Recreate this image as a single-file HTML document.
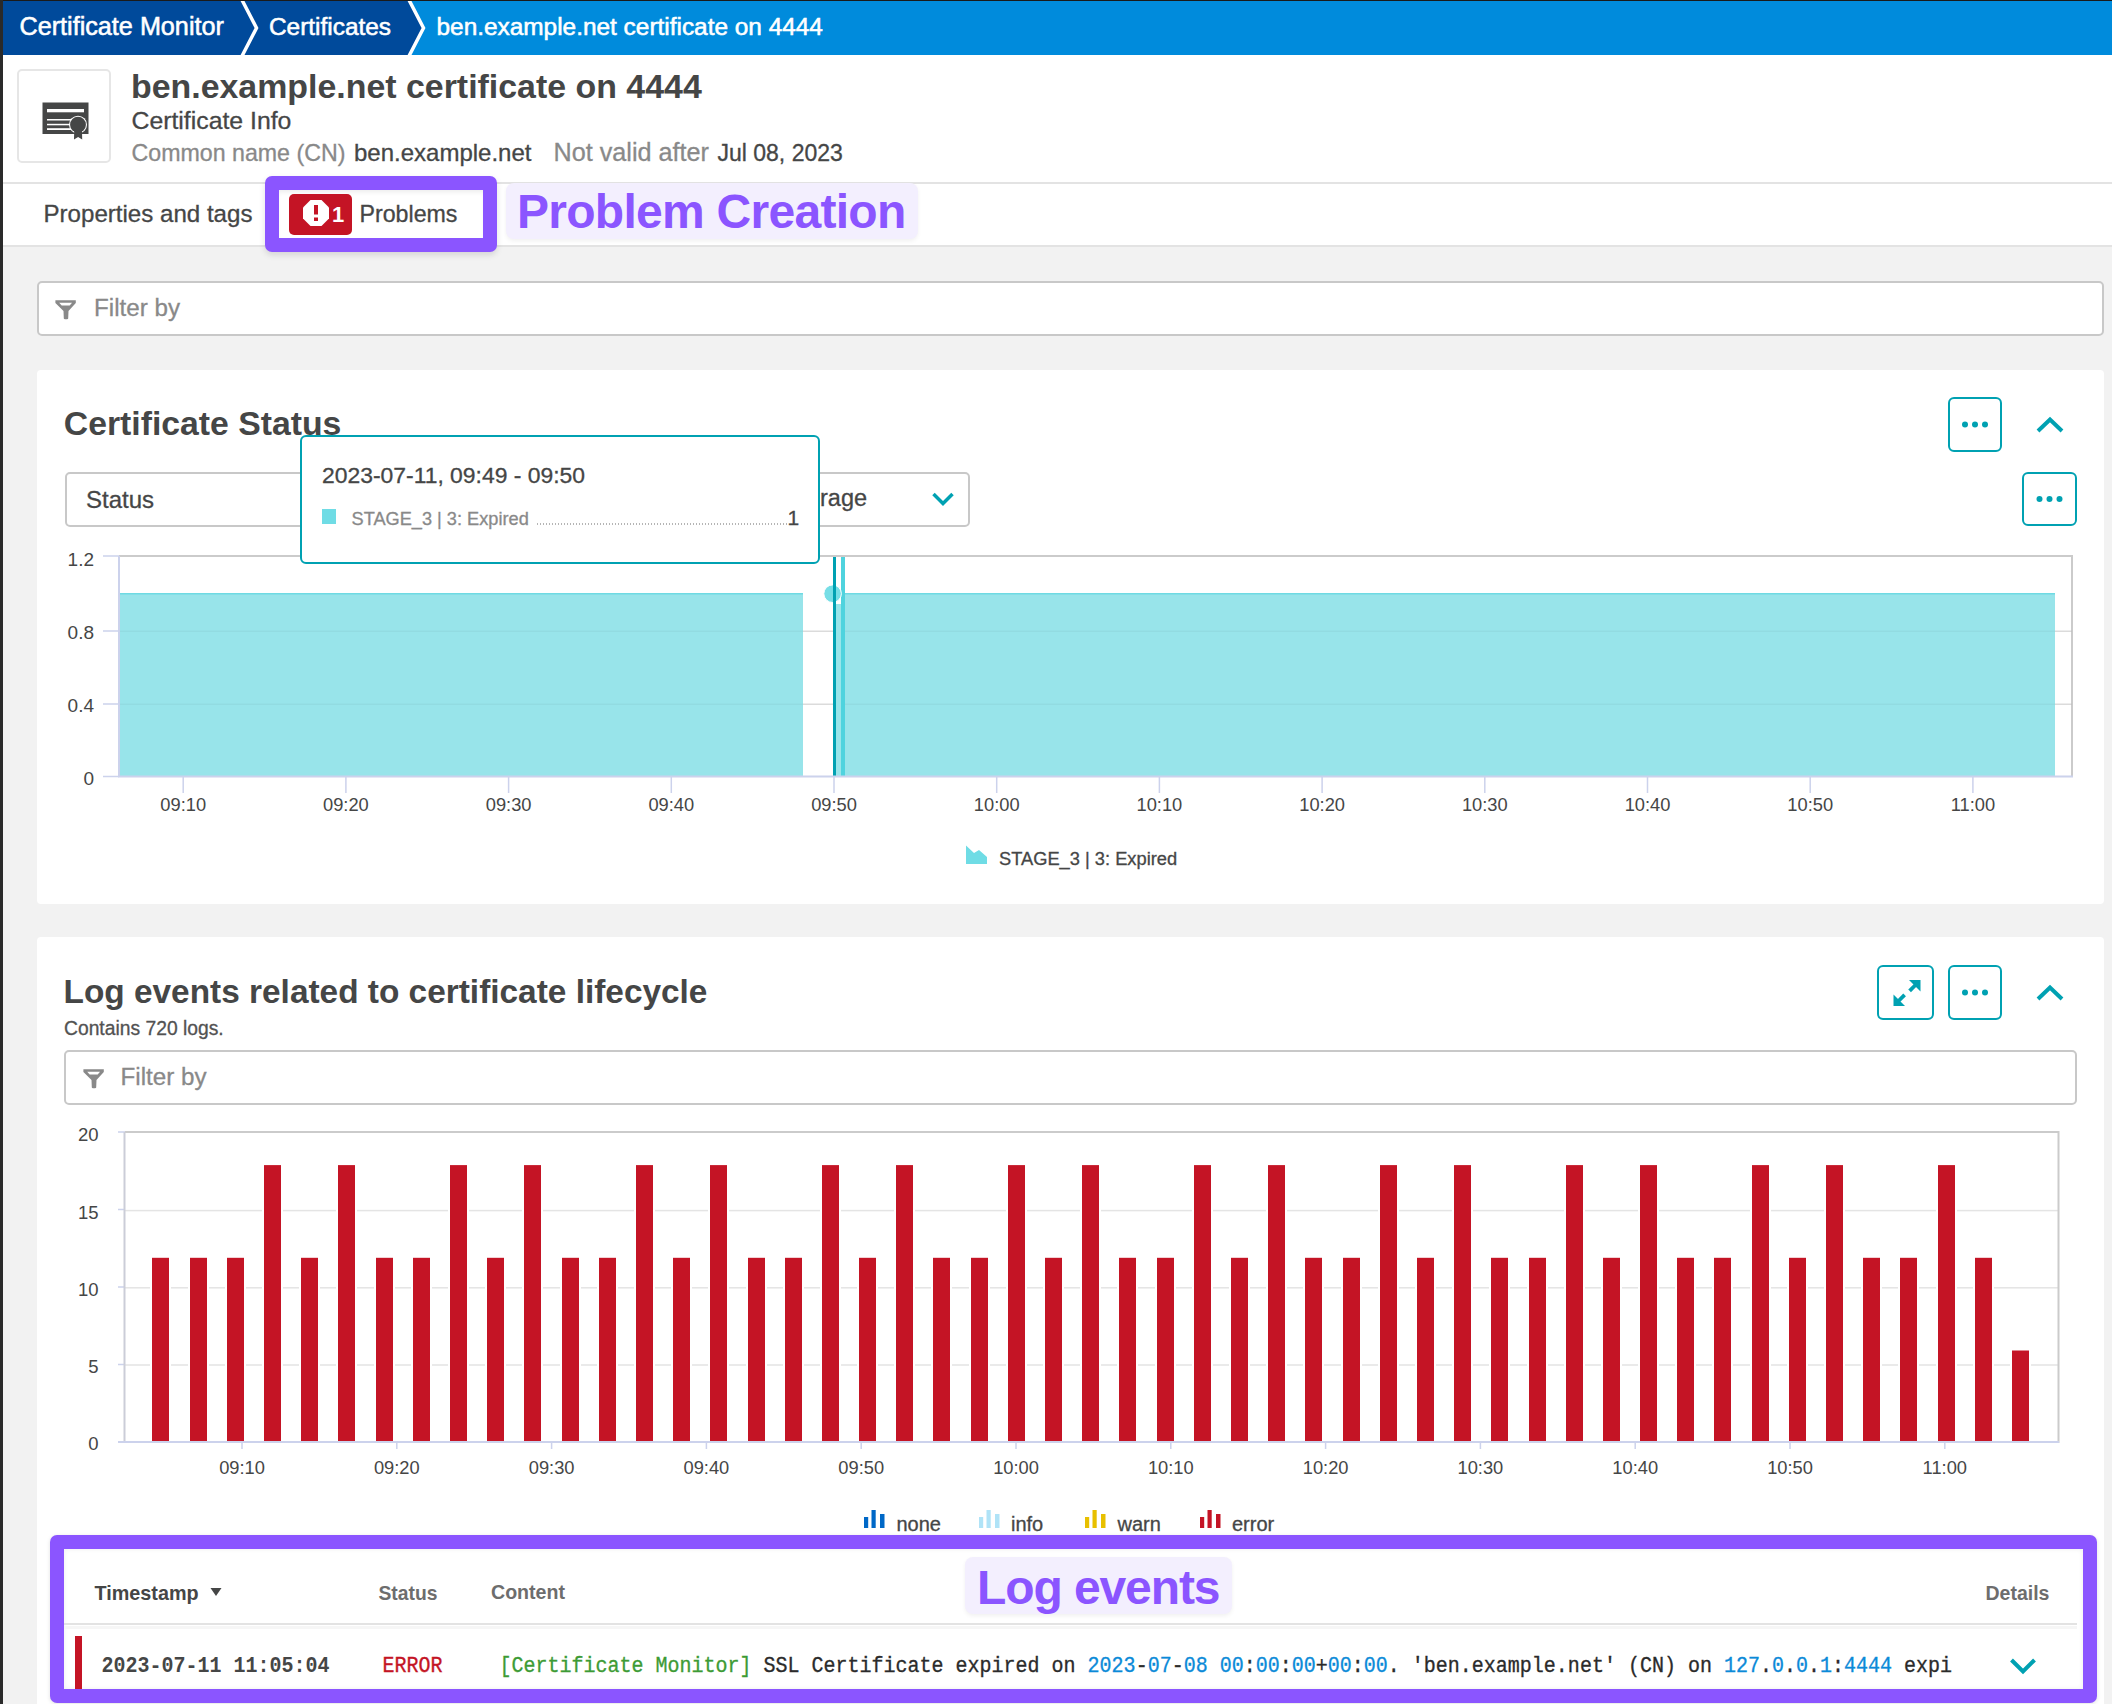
<!DOCTYPE html>
<html><head><meta charset="utf-8"><title>Certificate</title>
<style>
html,body{margin:0;padding:0;}
body{width:2112px;height:1704px;position:relative;overflow:hidden;background:#f2f2f2;font-family:'Liberation Sans', sans-serif;}
.r{position:absolute;}
.t{position:absolute;line-height:1;white-space:nowrap;}
</style></head><body>
<div class="r" style="left:0px;top:0px;width:2112px;height:1704px;background:#f2f2f2"></div>
<div class="r" style="left:3px;top:55px;width:2109px;height:191px;background:#fff"></div>
<div class="r" style="left:3px;top:182px;width:2109px;height:2px;background:#e3e3e3"></div>
<div class="r" style="left:3px;top:245px;width:2109px;height:2px;background:#e3e3e3"></div>
<svg class="r" style="left:0;top:0" width="2112" height="56" viewBox="0 0 2112 56">
<rect x="0" y="0" width="2112" height="55" fill="#008bdc"/>
<polygon points="0,0 410,0 424.5,28 410,55 0,55" fill="#004a9b"/>
<polyline points="242,0 256.5,28 242,56" fill="none" stroke="#fff" stroke-width="3.5"/>
<polyline points="409,0 423.5,28 409,56" fill="none" stroke="#fff" stroke-width="3.5"/>
<rect x="0" y="0" width="2112" height="1" fill="#1a1a1a"/>
</svg>
<div class="r" style="left:0px;top:0px;width:3px;height:1704px;background:#2a2a2a"></div>
<div class="t" style="left:19.5px;top:14.3px;font-size:25.2px;color:#fff;font-weight:normal;font-family:'Liberation Sans', sans-serif;-webkit-text-stroke:0.3px currentColor;-webkit-text-stroke:0.55px #fff;">Certificate Monitor</div>
<div class="t" style="left:269.0px;top:14.9px;font-size:24.4px;color:#fff;font-weight:normal;font-family:'Liberation Sans', sans-serif;-webkit-text-stroke:0.3px currentColor;-webkit-text-stroke:0.55px #fff;">Certificates</div>
<div class="t" style="left:436.5px;top:14.9px;font-size:24.4px;color:#fff;font-weight:normal;font-family:'Liberation Sans', sans-serif;-webkit-text-stroke:0.3px currentColor;-webkit-text-stroke:0.55px #fff;">ben.example.net certificate on 4444</div>
<div class="r" style="left:17px;top:69px;width:94px;height:94px;border:2px solid #e6e6e6;border-radius:5px;box-sizing:border-box;background:#fff"></div>
<svg class="r" style="left:40px;top:100px" width="50" height="42" viewBox="0 0 50 42">
<rect x="2.5" y="2.5" width="46" height="31.5" fill="#454646"/>
<rect x="7" y="9" width="37" height="3.3" fill="#fff"/>
<rect x="7" y="19" width="25" height="1.5" fill="#fff"/>
<rect x="7" y="23.8" width="25" height="1.5" fill="#fff"/>
<rect x="7" y="28.2" width="25" height="1.8" fill="#fff"/>
<circle cx="38" cy="24.7" r="9" fill="#fff"/>
<circle cx="38" cy="24.7" r="7.9" fill="#454646"/>
<polygon points="34.2,31 42,31 42.2,39.6 38.1,37 34,39.6" fill="#454646"/>
</svg>
<div class="t" style="left:131.0px;top:69.8px;font-size:33.9px;color:#454646;font-weight:bold;font-family:'Liberation Sans', sans-serif;">ben.example.net certificate on 4444</div>
<div class="t" style="left:131.5px;top:109.2px;font-size:24.8px;color:#454646;font-weight:normal;font-family:'Liberation Sans', sans-serif;-webkit-text-stroke:0.3px currentColor;">Certificate Info</div>
<div class="t" style="left:131.5px;top:142.1px;font-size:23.2px;color:#898989;font-weight:normal;font-family:'Liberation Sans', sans-serif;-webkit-text-stroke:0.3px currentColor;">Common name (CN)</div>
<div class="t" style="left:354.0px;top:141.4px;font-size:24.0px;color:#454646;font-weight:normal;font-family:'Liberation Sans', sans-serif;-webkit-text-stroke:0.3px currentColor;">ben.example.net</div>
<div class="t" style="left:553.5px;top:140.4px;font-size:25.2px;color:#898989;font-weight:normal;font-family:'Liberation Sans', sans-serif;-webkit-text-stroke:0.3px currentColor;">Not valid after</div>
<div class="t" style="left:717.5px;top:142.2px;font-size:23.0px;color:#454646;font-weight:normal;font-family:'Liberation Sans', sans-serif;-webkit-text-stroke:0.3px currentColor;">Jul 08, 2023</div>
<div class="t" style="left:43.5px;top:201.6px;font-size:24.1px;color:#454646;font-weight:normal;font-family:'Liberation Sans', sans-serif;-webkit-text-stroke:0.3px currentColor;">Properties and tags</div>
<div class="r" style="left:265px;top:176px;width:232px;height:76px;background:#8b55ff;border-radius:7px;box-shadow:0 3px 6px rgba(0,0,0,0.12)"></div>
<div class="r" style="left:279px;top:190px;width:204px;height:48px;background:#fff;box-shadow:inset 0 4px 5px -2px rgba(0,0,0,0.08)"></div>
<div class="r" style="left:289px;top:194px;width:63px;height:41px;background:#c41425;border-radius:5px"></div>
<svg class="r" style="left:302px;top:199px" width="28" height="28" viewBox="0 0 28 28">
<polygon points="8.5,1 19.5,1 27,8.5 27,19.5 19.5,27 8.5,27 1,19.5 1,8.5" fill="#fff"/>
<rect x="12" y="6" width="4" height="9.5" fill="#c41425"/>
<rect x="12" y="18.5" width="4" height="3.5" fill="#c41425"/>
</svg>
<div class="t" style="left:332.0px;top:203.9px;font-size:22px;color:#fff;font-weight:bold;font-family:'Liberation Sans', sans-serif;">1</div>
<div class="t" style="left:359.5px;top:203.4px;font-size:23.2px;color:#454646;font-weight:normal;font-family:'Liberation Sans', sans-serif;-webkit-text-stroke:0.3px currentColor;">Problems</div>
<div class="r" style="left:506px;top:183px;width:412px;height:56px;background:#f3effe;border-radius:8px;box-shadow:0 2px 4px rgba(0,0,0,0.06)"></div>
<div class="t" style="left:517.0px;top:187.8px;font-size:48px;color:#8b55ff;font-weight:bold;font-family:'Liberation Sans', sans-serif;letter-spacing:-0.72px;">Problem Creation</div>
<div class="r" style="left:37px;top:281px;width:2067px;height:55px;background:#fff;border:2px solid #c8c8c8;border-radius:5px;box-sizing:border-box"></div>
<svg class="r" style="left:54px;top:299px" width="24" height="22" viewBox="0 0 24 22">
<path d="M1.4,1.3 H21.8 V4 L14.5,12 L14.2,19.5 Q14,20.2 13,20.2 H11 Q10,20.2 9.8,19.5 L9.5,12 L1.4,4 Z" fill="#898989"/>
<path d="M5.2,3.8 H18 L15.7,6.5 H7.7 Z" fill="#fff"/>
</svg>
<div class="t" style="left:94.0px;top:295.5px;font-size:24.2px;color:#898989;font-weight:normal;font-family:'Liberation Sans', sans-serif;-webkit-text-stroke:0.3px currentColor;">Filter by</div>
<div class="r" style="left:37px;top:370px;width:2067px;height:534px;background:#fff;border-radius:4px"></div>
<div class="t" style="left:63.8px;top:407.4px;font-size:33.75px;color:#454646;font-weight:bold;font-family:'Liberation Sans', sans-serif;">Certificate Status</div>
<svg class="r" style="left:1948px;top:397px" width="54" height="55" viewBox="0 0 54 55">
<rect x="1" y="1" width="52" height="53" rx="5" fill="#fff" stroke="#00a1b2" stroke-width="2"/>
<circle cx="17.0" cy="27.5" r="3" fill="#00a1b2"/><circle cx="27.0" cy="27.5" r="3" fill="#00a1b2"/><circle cx="37.0" cy="27.5" r="3" fill="#00a1b2"/>
</svg>
<svg class="r" style="left:2035px;top:414px" width="30" height="20" viewBox="0 0 30 20">
<polyline points="3,17 15,5.5 27,17" fill="none" stroke="#00a1b2" stroke-width="4"/>
</svg>
<svg class="r" style="left:2022px;top:472px" width="55" height="54" viewBox="0 0 55 54">
<rect x="1" y="1" width="53" height="52" rx="5" fill="#fff" stroke="#00a1b2" stroke-width="2"/>
<circle cx="17.5" cy="27.0" r="3" fill="#00a1b2"/><circle cx="27.5" cy="27.0" r="3" fill="#00a1b2"/><circle cx="37.5" cy="27.0" r="3" fill="#00a1b2"/>
</svg>
<div class="r" style="left:65px;top:472px;width:905px;height:55px;background:#fff;border:2px solid #c8c8c8;border-radius:5px;box-sizing:border-box"></div>
<div class="t" style="left:86.0px;top:488.2px;font-size:24px;color:#454646;font-weight:normal;font-family:'Liberation Sans', sans-serif;-webkit-text-stroke:0.3px currentColor;">Status</div>
<div class="t" style="left:820.0px;top:486.6px;font-size:23.5px;color:#454646;font-weight:normal;font-family:'Liberation Sans', sans-serif;-webkit-text-stroke:0.3px currentColor;">rage</div>
<svg class="r" style="left:930px;top:490px" width="26" height="20" viewBox="0 0 26 20">
<polyline points="3.5,4 13,13.5 22.5,4" fill="none" stroke="#00a1b2" stroke-width="3.5"/>
</svg>
<svg class="r" style="left:0;top:540px" width="2112" height="360" viewBox="0 540 2112 360">
<rect x="119" y="630.5" width="1953" height="1.5" fill="#e4e4e4"/>
<rect x="119" y="703.5" width="1953" height="1.5" fill="#e4e4e4"/>
<rect x="119" y="555" width="1954" height="2" fill="#cbcbcb"/>
<rect x="2071" y="555" width="2" height="222" fill="#cbcbcb"/>
<rect x="103" y="555.25" width="16" height="1.5" fill="#ccd2ec"/>
<rect x="103" y="630.25" width="16" height="1.5" fill="#ccd2ec"/>
<rect x="103" y="703.25" width="16" height="1.5" fill="#ccd2ec"/>
<rect x="103" y="775.75" width="16" height="1.5" fill="#ccd2ec"/>
<rect x="119" y="593" width="684" height="183" fill="#98e4ea"/>
<rect x="119" y="593" width="684" height="1.5" fill="#6fdae3"/>
<rect x="845" y="593" width="1210" height="183" fill="#98e4ea"/>
<rect x="845" y="593" width="1210" height="1.5" fill="#6fdae3"/>
<rect x="119" y="630.5" width="1953" height="1.5" fill="#000" fill-opacity="0.035"/>
<rect x="119" y="703.5" width="1953" height="1.5" fill="#000" fill-opacity="0.035"/>
<rect x="836" y="604" width="5" height="172" fill="#98e5ea"/>
<rect x="833" y="557" width="3" height="219" fill="#00a1b2"/>
<rect x="841" y="557" width="4" height="219" fill="#4fd3de"/>
<circle cx="832.6" cy="593.7" r="8.8" fill="#6fdce5" fill-opacity="0.95" stroke="#fff" stroke-width="1"/>
<rect x="833" y="584" width="3" height="20" fill="#00a1b2"/>
<rect x="118" y="556" width="2" height="221" fill="#ccd2ec"/>
<rect x="118" y="775.5" width="1955" height="2" fill="#ccd2ec"/>
<rect x="182.45" y="776" width="1.5" height="17" fill="#ccd2ec"/>
<rect x="345.15" y="776" width="1.5" height="17" fill="#ccd2ec"/>
<rect x="507.85" y="776" width="1.5" height="17" fill="#ccd2ec"/>
<rect x="670.55" y="776" width="1.5" height="17" fill="#ccd2ec"/>
<rect x="833.25" y="776" width="1.5" height="17" fill="#ccd2ec"/>
<rect x="995.95" y="776" width="1.5" height="17" fill="#ccd2ec"/>
<rect x="1158.65" y="776" width="1.5" height="17" fill="#ccd2ec"/>
<rect x="1321.35" y="776" width="1.5" height="17" fill="#ccd2ec"/>
<rect x="1484.05" y="776" width="1.5" height="17" fill="#ccd2ec"/>
<rect x="1646.75" y="776" width="1.5" height="17" fill="#ccd2ec"/>
<rect x="1809.45" y="776" width="1.5" height="17" fill="#ccd2ec"/>
<rect x="1972.15" y="776" width="1.5" height="17" fill="#ccd2ec"/>
</svg>
<div class="t" style="left:0;width:94px;text-align:right;top:549.9px;font-size:19px;color:#454646;font-family:'Liberation Sans', sans-serif">1.2</div>
<div class="t" style="left:0;width:94px;text-align:right;top:622.9px;font-size:19px;color:#454646;font-family:'Liberation Sans', sans-serif">0.8</div>
<div class="t" style="left:0;width:94px;text-align:right;top:695.9px;font-size:19px;color:#454646;font-family:'Liberation Sans', sans-serif">0.4</div>
<div class="t" style="left:0;width:94px;text-align:right;top:768.9px;font-size:19px;color:#454646;font-family:'Liberation Sans', sans-serif">0</div>
<div class="t" style="left:123.2px;width:120px;text-align:center;top:795.5px;font-size:18.3px;color:#454646;font-family:'Liberation Sans', sans-serif">09:10</div>
<div class="t" style="left:285.9px;width:120px;text-align:center;top:795.5px;font-size:18.3px;color:#454646;font-family:'Liberation Sans', sans-serif">09:20</div>
<div class="t" style="left:448.6px;width:120px;text-align:center;top:795.5px;font-size:18.3px;color:#454646;font-family:'Liberation Sans', sans-serif">09:30</div>
<div class="t" style="left:611.3px;width:120px;text-align:center;top:795.5px;font-size:18.3px;color:#454646;font-family:'Liberation Sans', sans-serif">09:40</div>
<div class="t" style="left:774.0px;width:120px;text-align:center;top:795.5px;font-size:18.3px;color:#454646;font-family:'Liberation Sans', sans-serif">09:50</div>
<div class="t" style="left:936.7px;width:120px;text-align:center;top:795.5px;font-size:18.3px;color:#454646;font-family:'Liberation Sans', sans-serif">10:00</div>
<div class="t" style="left:1099.4px;width:120px;text-align:center;top:795.5px;font-size:18.3px;color:#454646;font-family:'Liberation Sans', sans-serif">10:10</div>
<div class="t" style="left:1262.1px;width:120px;text-align:center;top:795.5px;font-size:18.3px;color:#454646;font-family:'Liberation Sans', sans-serif">10:20</div>
<div class="t" style="left:1424.8px;width:120px;text-align:center;top:795.5px;font-size:18.3px;color:#454646;font-family:'Liberation Sans', sans-serif">10:30</div>
<div class="t" style="left:1587.5px;width:120px;text-align:center;top:795.5px;font-size:18.3px;color:#454646;font-family:'Liberation Sans', sans-serif">10:40</div>
<div class="t" style="left:1750.2px;width:120px;text-align:center;top:795.5px;font-size:18.3px;color:#454646;font-family:'Liberation Sans', sans-serif">10:50</div>
<div class="t" style="left:1912.9px;width:120px;text-align:center;top:795.5px;font-size:18.3px;color:#454646;font-family:'Liberation Sans', sans-serif">11:00</div>
<svg class="r" style="left:965px;top:845px" width="23" height="20" viewBox="0 0 23 20">
<polygon points="1,0.5 9,8 14,5 22,12 22,19 1,19" fill="#6fdce5"/>
</svg>
<div class="t" style="left:999.0px;top:850.3px;font-size:18.3px;color:#454646;font-weight:normal;font-family:'Liberation Sans', sans-serif;-webkit-text-stroke:0.3px currentColor;">STAGE_3 | 3: Expired</div>
<div class="r" style="left:300px;top:435px;width:520px;height:129px;background:#fff;border:2px solid #00a1b2;border-radius:6px;box-sizing:border-box"></div>
<div class="t" style="left:322.0px;top:463.6px;font-size:22.9px;color:#454646;font-weight:normal;font-family:'Liberation Sans', sans-serif;-webkit-text-stroke:0.3px currentColor;">2023-07-11, 09:49 - 09:50</div>
<div class="r" style="left:322px;top:509px;width:14px;height:15px;background:#6fdce5"></div>
<div class="t" style="left:351.5px;top:509.5px;font-size:18.2px;color:#898989;font-weight:normal;font-family:'Liberation Sans', sans-serif;-webkit-text-stroke:0.3px currentColor;">STAGE_3 | 3: Expired</div>
<div class="r" style="left:537px;top:523px;width:250px;height:2px;background:repeating-linear-gradient(90deg,#b5b5b5 0 1.5px,transparent 1.5px 3px)"></div>
<div class="t" style="left:787.5px;top:507.1px;font-size:21px;color:#454646;font-weight:normal;font-family:'Liberation Sans', sans-serif;-webkit-text-stroke:0.3px currentColor;">1</div>
<div class="r" style="left:37px;top:937px;width:2067px;height:800px;background:#fff;border-radius:4px"></div>
<div class="t" style="left:63.5px;top:974.7px;font-size:33.4px;color:#454646;font-weight:bold;font-family:'Liberation Sans', sans-serif;">Log events related to certificate lifecycle</div>
<div class="t" style="left:64.0px;top:1019.2px;font-size:19.3px;color:#525252;font-weight:normal;font-family:'Liberation Sans', sans-serif;-webkit-text-stroke:0.3px currentColor;">Contains 720 logs.</div>
<svg class="r" style="left:1877px;top:965px" width="57" height="55" viewBox="0 0 57 55">
<rect x="1" y="1" width="55" height="53" rx="5" fill="#fff" stroke="#00a1b2" stroke-width="2"/>
<polygon points="32,15 43.5,15 43.5,26.5" fill="#00a1b2"/>
<polygon points="16.5,29.5 16.5,41 28,41" fill="#00a1b2"/>
<line x1="38.5" y1="20" x2="32.6" y2="25.9" stroke="#00a1b2" stroke-width="3.8"/>
<line x1="21.5" y1="36" x2="27.6" y2="29.9" stroke="#00a1b2" stroke-width="3.8"/>
</svg>
<svg class="r" style="left:1948px;top:965px" width="54" height="55" viewBox="0 0 54 55">
<rect x="1" y="1" width="52" height="53" rx="5" fill="#fff" stroke="#00a1b2" stroke-width="2"/>
<circle cx="17.0" cy="27.5" r="3" fill="#00a1b2"/><circle cx="27.0" cy="27.5" r="3" fill="#00a1b2"/><circle cx="37.0" cy="27.5" r="3" fill="#00a1b2"/>
</svg>
<svg class="r" style="left:2035px;top:981.5px" width="30" height="20" viewBox="0 0 30 20">
<polyline points="3,17 15,5.5 27,17" fill="none" stroke="#00a1b2" stroke-width="4"/>
</svg>
<div class="r" style="left:64px;top:1050px;width:2013px;height:55px;background:#fff;border:2px solid #c8c8c8;border-radius:5px;box-sizing:border-box"></div>
<svg class="r" style="left:82px;top:1068px" width="24" height="22" viewBox="0 0 24 22">
<path d="M1.4,1.3 H21.8 V4 L14.5,12 L14.2,19.5 Q14,20.2 13,20.2 H11 Q10,20.2 9.8,19.5 L9.5,12 L1.4,4 Z" fill="#898989"/>
<path d="M5.2,3.8 H18 L15.7,6.5 H7.7 Z" fill="#fff"/>
</svg>
<div class="t" style="left:120.5px;top:1064.7px;font-size:24.2px;color:#898989;font-weight:normal;font-family:'Liberation Sans', sans-serif;-webkit-text-stroke:0.3px currentColor;">Filter by</div>
<svg class="r" style="left:0;top:1120px" width="2112" height="340" viewBox="0 1120 2112 340">
<rect x="125" y="1364.25" width="1933" height="1.5" fill="#e4e4e4"/>
<rect x="125" y="1287.05" width="1933" height="1.5" fill="#e4e4e4"/>
<rect x="125" y="1209.85" width="1933" height="1.5" fill="#e4e4e4"/>
<rect x="125" y="1131" width="1934" height="2" fill="#cbcbcb"/>
<rect x="2057.5" y="1131" width="2" height="312" fill="#cbcbcb"/>
<rect x="118" y="1441.25" width="7" height="1.5" fill="#ccd2ec"/>
<rect x="118" y="1363.75" width="7" height="1.5" fill="#ccd2ec"/>
<rect x="118" y="1286.25" width="7" height="1.5" fill="#ccd2ec"/>
<rect x="118" y="1208.75" width="7" height="1.5" fill="#ccd2ec"/>
<rect x="118" y="1131.25" width="7" height="1.5" fill="#ccd2ec"/>
<rect x="150" y="1255.8" width="21" height="186.2" fill="#fff"/>
<rect x="152" y="1257.8" width="17" height="184.2" fill="#c41425"/>
<rect x="188" y="1255.8" width="21" height="186.2" fill="#fff"/>
<rect x="190" y="1257.8" width="17" height="184.2" fill="#c41425"/>
<rect x="225" y="1255.8" width="21" height="186.2" fill="#fff"/>
<rect x="227" y="1257.8" width="17" height="184.2" fill="#c41425"/>
<rect x="262" y="1163.1" width="21" height="278.9" fill="#fff"/>
<rect x="264" y="1165.1" width="17" height="276.9" fill="#c41425"/>
<rect x="299" y="1255.8" width="21" height="186.2" fill="#fff"/>
<rect x="301" y="1257.8" width="17" height="184.2" fill="#c41425"/>
<rect x="336" y="1163.1" width="21" height="278.9" fill="#fff"/>
<rect x="338" y="1165.1" width="17" height="276.9" fill="#c41425"/>
<rect x="374" y="1255.8" width="21" height="186.2" fill="#fff"/>
<rect x="376" y="1257.8" width="17" height="184.2" fill="#c41425"/>
<rect x="411" y="1255.8" width="21" height="186.2" fill="#fff"/>
<rect x="413" y="1257.8" width="17" height="184.2" fill="#c41425"/>
<rect x="448" y="1163.1" width="21" height="278.9" fill="#fff"/>
<rect x="450" y="1165.1" width="17" height="276.9" fill="#c41425"/>
<rect x="485" y="1255.8" width="21" height="186.2" fill="#fff"/>
<rect x="487" y="1257.8" width="17" height="184.2" fill="#c41425"/>
<rect x="522" y="1163.1" width="21" height="278.9" fill="#fff"/>
<rect x="524" y="1165.1" width="17" height="276.9" fill="#c41425"/>
<rect x="560" y="1255.8" width="21" height="186.2" fill="#fff"/>
<rect x="562" y="1257.8" width="17" height="184.2" fill="#c41425"/>
<rect x="597" y="1255.8" width="21" height="186.2" fill="#fff"/>
<rect x="599" y="1257.8" width="17" height="184.2" fill="#c41425"/>
<rect x="634" y="1163.1" width="21" height="278.9" fill="#fff"/>
<rect x="636" y="1165.1" width="17" height="276.9" fill="#c41425"/>
<rect x="671" y="1255.8" width="21" height="186.2" fill="#fff"/>
<rect x="673" y="1257.8" width="17" height="184.2" fill="#c41425"/>
<rect x="708" y="1163.1" width="21" height="278.9" fill="#fff"/>
<rect x="710" y="1165.1" width="17" height="276.9" fill="#c41425"/>
<rect x="746" y="1255.8" width="21" height="186.2" fill="#fff"/>
<rect x="748" y="1257.8" width="17" height="184.2" fill="#c41425"/>
<rect x="783" y="1255.8" width="21" height="186.2" fill="#fff"/>
<rect x="785" y="1257.8" width="17" height="184.2" fill="#c41425"/>
<rect x="820" y="1163.1" width="21" height="278.9" fill="#fff"/>
<rect x="822" y="1165.1" width="17" height="276.9" fill="#c41425"/>
<rect x="857" y="1255.8" width="21" height="186.2" fill="#fff"/>
<rect x="859" y="1257.8" width="17" height="184.2" fill="#c41425"/>
<rect x="894" y="1163.1" width="21" height="278.9" fill="#fff"/>
<rect x="896" y="1165.1" width="17" height="276.9" fill="#c41425"/>
<rect x="931" y="1255.8" width="21" height="186.2" fill="#fff"/>
<rect x="933" y="1257.8" width="17" height="184.2" fill="#c41425"/>
<rect x="969" y="1255.8" width="21" height="186.2" fill="#fff"/>
<rect x="971" y="1257.8" width="17" height="184.2" fill="#c41425"/>
<rect x="1006" y="1163.1" width="21" height="278.9" fill="#fff"/>
<rect x="1008" y="1165.1" width="17" height="276.9" fill="#c41425"/>
<rect x="1043" y="1255.8" width="21" height="186.2" fill="#fff"/>
<rect x="1045" y="1257.8" width="17" height="184.2" fill="#c41425"/>
<rect x="1080" y="1163.1" width="21" height="278.9" fill="#fff"/>
<rect x="1082" y="1165.1" width="17" height="276.9" fill="#c41425"/>
<rect x="1117" y="1255.8" width="21" height="186.2" fill="#fff"/>
<rect x="1119" y="1257.8" width="17" height="184.2" fill="#c41425"/>
<rect x="1155" y="1255.8" width="21" height="186.2" fill="#fff"/>
<rect x="1157" y="1257.8" width="17" height="184.2" fill="#c41425"/>
<rect x="1192" y="1163.1" width="21" height="278.9" fill="#fff"/>
<rect x="1194" y="1165.1" width="17" height="276.9" fill="#c41425"/>
<rect x="1229" y="1255.8" width="21" height="186.2" fill="#fff"/>
<rect x="1231" y="1257.8" width="17" height="184.2" fill="#c41425"/>
<rect x="1266" y="1163.1" width="21" height="278.9" fill="#fff"/>
<rect x="1268" y="1165.1" width="17" height="276.9" fill="#c41425"/>
<rect x="1303" y="1255.8" width="21" height="186.2" fill="#fff"/>
<rect x="1305" y="1257.8" width="17" height="184.2" fill="#c41425"/>
<rect x="1341" y="1255.8" width="21" height="186.2" fill="#fff"/>
<rect x="1343" y="1257.8" width="17" height="184.2" fill="#c41425"/>
<rect x="1378" y="1163.1" width="21" height="278.9" fill="#fff"/>
<rect x="1380" y="1165.1" width="17" height="276.9" fill="#c41425"/>
<rect x="1415" y="1255.8" width="21" height="186.2" fill="#fff"/>
<rect x="1417" y="1257.8" width="17" height="184.2" fill="#c41425"/>
<rect x="1452" y="1163.1" width="21" height="278.9" fill="#fff"/>
<rect x="1454" y="1165.1" width="17" height="276.9" fill="#c41425"/>
<rect x="1489" y="1255.8" width="21" height="186.2" fill="#fff"/>
<rect x="1491" y="1257.8" width="17" height="184.2" fill="#c41425"/>
<rect x="1527" y="1255.8" width="21" height="186.2" fill="#fff"/>
<rect x="1529" y="1257.8" width="17" height="184.2" fill="#c41425"/>
<rect x="1564" y="1163.1" width="21" height="278.9" fill="#fff"/>
<rect x="1566" y="1165.1" width="17" height="276.9" fill="#c41425"/>
<rect x="1601" y="1255.8" width="21" height="186.2" fill="#fff"/>
<rect x="1603" y="1257.8" width="17" height="184.2" fill="#c41425"/>
<rect x="1638" y="1163.1" width="21" height="278.9" fill="#fff"/>
<rect x="1640" y="1165.1" width="17" height="276.9" fill="#c41425"/>
<rect x="1675" y="1255.8" width="21" height="186.2" fill="#fff"/>
<rect x="1677" y="1257.8" width="17" height="184.2" fill="#c41425"/>
<rect x="1712" y="1255.8" width="21" height="186.2" fill="#fff"/>
<rect x="1714" y="1257.8" width="17" height="184.2" fill="#c41425"/>
<rect x="1750" y="1163.1" width="21" height="278.9" fill="#fff"/>
<rect x="1752" y="1165.1" width="17" height="276.9" fill="#c41425"/>
<rect x="1787" y="1255.8" width="21" height="186.2" fill="#fff"/>
<rect x="1789" y="1257.8" width="17" height="184.2" fill="#c41425"/>
<rect x="1824" y="1163.1" width="21" height="278.9" fill="#fff"/>
<rect x="1826" y="1165.1" width="17" height="276.9" fill="#c41425"/>
<rect x="1861" y="1255.8" width="21" height="186.2" fill="#fff"/>
<rect x="1863" y="1257.8" width="17" height="184.2" fill="#c41425"/>
<rect x="1898" y="1255.8" width="21" height="186.2" fill="#fff"/>
<rect x="1900" y="1257.8" width="17" height="184.2" fill="#c41425"/>
<rect x="1936" y="1163.1" width="21" height="278.9" fill="#fff"/>
<rect x="1938" y="1165.1" width="17" height="276.9" fill="#c41425"/>
<rect x="1973" y="1255.8" width="21" height="186.2" fill="#fff"/>
<rect x="1975" y="1257.8" width="17" height="184.2" fill="#c41425"/>
<rect x="2010" y="1348.5" width="21" height="93.5" fill="#fff"/>
<rect x="2012" y="1350.5" width="17" height="91.5" fill="#c41425"/>
<rect x="123.5" y="1132" width="2" height="311" fill="#cbcdd8"/>
<rect x="118" y="1441" width="1941" height="2" fill="#ccd2ec"/>
<rect x="241.25" y="1442" width="1.5" height="7" fill="#ccd2ec"/>
<rect x="396.05" y="1442" width="1.5" height="7" fill="#ccd2ec"/>
<rect x="550.85" y="1442" width="1.5" height="7" fill="#ccd2ec"/>
<rect x="705.65" y="1442" width="1.5" height="7" fill="#ccd2ec"/>
<rect x="860.45" y="1442" width="1.5" height="7" fill="#ccd2ec"/>
<rect x="1015.25" y="1442" width="1.5" height="7" fill="#ccd2ec"/>
<rect x="1170.05" y="1442" width="1.5" height="7" fill="#ccd2ec"/>
<rect x="1324.85" y="1442" width="1.5" height="7" fill="#ccd2ec"/>
<rect x="1479.65" y="1442" width="1.5" height="7" fill="#ccd2ec"/>
<rect x="1634.45" y="1442" width="1.5" height="7" fill="#ccd2ec"/>
<rect x="1789.25" y="1442" width="1.5" height="7" fill="#ccd2ec"/>
<rect x="1944.05" y="1442" width="1.5" height="7" fill="#ccd2ec"/>
</svg>
<div class="t" style="left:0;width:98.5px;text-align:right;top:1434.8px;font-size:18.5px;color:#454646;font-family:'Liberation Sans', sans-serif">0</div>
<div class="t" style="left:0;width:98.5px;text-align:right;top:1357.7px;font-size:18.5px;color:#454646;font-family:'Liberation Sans', sans-serif">5</div>
<div class="t" style="left:0;width:98.5px;text-align:right;top:1280.6px;font-size:18.5px;color:#454646;font-family:'Liberation Sans', sans-serif">10</div>
<div class="t" style="left:0;width:98.5px;text-align:right;top:1203.5px;font-size:18.5px;color:#454646;font-family:'Liberation Sans', sans-serif">15</div>
<div class="t" style="left:0;width:98.5px;text-align:right;top:1126.4px;font-size:18.5px;color:#454646;font-family:'Liberation Sans', sans-serif">20</div>
<div class="t" style="left:182.0px;width:120px;text-align:center;top:1459.0px;font-size:18.3px;color:#454646;font-family:'Liberation Sans', sans-serif">09:10</div>
<div class="t" style="left:336.8px;width:120px;text-align:center;top:1459.0px;font-size:18.3px;color:#454646;font-family:'Liberation Sans', sans-serif">09:20</div>
<div class="t" style="left:491.6px;width:120px;text-align:center;top:1459.0px;font-size:18.3px;color:#454646;font-family:'Liberation Sans', sans-serif">09:30</div>
<div class="t" style="left:646.4px;width:120px;text-align:center;top:1459.0px;font-size:18.3px;color:#454646;font-family:'Liberation Sans', sans-serif">09:40</div>
<div class="t" style="left:801.2px;width:120px;text-align:center;top:1459.0px;font-size:18.3px;color:#454646;font-family:'Liberation Sans', sans-serif">09:50</div>
<div class="t" style="left:956.0px;width:120px;text-align:center;top:1459.0px;font-size:18.3px;color:#454646;font-family:'Liberation Sans', sans-serif">10:00</div>
<div class="t" style="left:1110.8px;width:120px;text-align:center;top:1459.0px;font-size:18.3px;color:#454646;font-family:'Liberation Sans', sans-serif">10:10</div>
<div class="t" style="left:1265.6px;width:120px;text-align:center;top:1459.0px;font-size:18.3px;color:#454646;font-family:'Liberation Sans', sans-serif">10:20</div>
<div class="t" style="left:1420.4px;width:120px;text-align:center;top:1459.0px;font-size:18.3px;color:#454646;font-family:'Liberation Sans', sans-serif">10:30</div>
<div class="t" style="left:1575.2px;width:120px;text-align:center;top:1459.0px;font-size:18.3px;color:#454646;font-family:'Liberation Sans', sans-serif">10:40</div>
<div class="t" style="left:1730.0px;width:120px;text-align:center;top:1459.0px;font-size:18.3px;color:#454646;font-family:'Liberation Sans', sans-serif">10:50</div>
<div class="t" style="left:1884.8px;width:120px;text-align:center;top:1459.0px;font-size:18.3px;color:#454646;font-family:'Liberation Sans', sans-serif">11:00</div>
<svg class="r" style="left:864px;top:1510px" width="22" height="18" viewBox="0 0 22 18">
<rect x="0" y="7" width="4.2" height="11" fill="#0068c7"/>
<rect x="7.5" y="0" width="4.2" height="18" fill="#0068c7"/>
<rect x="16" y="4" width="4.5" height="14" fill="#0068c7"/>
</svg>
<div class="t" style="left:896.5px;top:1513.8px;font-size:20px;color:#454646;font-weight:normal;font-family:'Liberation Sans', sans-serif;-webkit-text-stroke:0.3px currentColor;">none</div>
<svg class="r" style="left:979px;top:1510px" width="22" height="18" viewBox="0 0 22 18">
<rect x="0" y="7" width="4.2" height="11" fill="#b0e3f7"/>
<rect x="7.5" y="0" width="4.2" height="18" fill="#b0e3f7"/>
<rect x="16" y="4" width="4.5" height="14" fill="#b0e3f7"/>
</svg>
<div class="t" style="left:1011.0px;top:1513.8px;font-size:20px;color:#454646;font-weight:normal;font-family:'Liberation Sans', sans-serif;-webkit-text-stroke:0.3px currentColor;">info</div>
<svg class="r" style="left:1084.5px;top:1510px" width="22" height="18" viewBox="0 0 22 18">
<rect x="0" y="7" width="4.2" height="11" fill="#e8c000"/>
<rect x="7.5" y="0" width="4.2" height="18" fill="#e8c000"/>
<rect x="16" y="4" width="4.5" height="14" fill="#e8c000"/>
</svg>
<div class="t" style="left:1117.5px;top:1513.8px;font-size:20px;color:#454646;font-weight:normal;font-family:'Liberation Sans', sans-serif;-webkit-text-stroke:0.3px currentColor;">warn</div>
<svg class="r" style="left:1200px;top:1510px" width="22" height="18" viewBox="0 0 22 18">
<rect x="0" y="7" width="4.2" height="11" fill="#c41425"/>
<rect x="7.5" y="0" width="4.2" height="18" fill="#c41425"/>
<rect x="16" y="4" width="4.5" height="14" fill="#c41425"/>
</svg>
<div class="t" style="left:1232.0px;top:1513.8px;font-size:20px;color:#454646;font-weight:normal;font-family:'Liberation Sans', sans-serif;-webkit-text-stroke:0.3px currentColor;">error</div>
<div class="r" style="left:50px;top:1535px;width:2047px;height:168px;background:#8b55ff;border-radius:7px;box-shadow:0 1px 4px rgba(0,0,0,0.12)"></div>
<div class="r" style="left:64px;top:1549px;width:2019px;height:140px;background:#fff;box-shadow:inset 0 0 5px rgba(0,0,0,0.07)"></div>
<div class="t" style="left:94.5px;top:1584.2px;font-size:19.8px;color:#454646;font-weight:bold;font-family:'Liberation Sans', sans-serif;">Timestamp</div>
<svg class="r" style="left:210px;top:1587px" width="12" height="10" viewBox="0 0 12 10">
<polygon points="0.5,1 11.5,1 6,9" fill="#454646"/>
</svg>
<div class="t" style="left:378.5px;top:1583.7px;font-size:19.3px;color:#6d6d6d;font-weight:bold;font-family:'Liberation Sans', sans-serif;">Status</div>
<div class="t" style="left:491.0px;top:1583.4px;font-size:19.6px;color:#6d6d6d;font-weight:bold;font-family:'Liberation Sans', sans-serif;">Content</div>
<div class="t" style="left:1985.5px;top:1583.5px;font-size:19.5px;color:#6d6d6d;font-weight:bold;font-family:'Liberation Sans', sans-serif;">Details</div>
<div class="r" style="left:64px;top:1623px;width:2013px;height:2px;background:#e3e3e3"></div>
<div class="r" style="left:64px;top:1626px;width:2013px;height:3px;background:#f6f6f6"></div>
<div class="r" style="left:75px;top:1636px;width:7px;height:53px;background:#c41425"></div>
<div class="t" style="left:101.5px;top:1656.7px;font-size:20.0px;color:#454646;font-weight:bold;font-family:'Liberation Mono', monospace;transform:scaleY(1.12);transform-origin:0 15.3px;">2023-07-11 11:05:04</div>
<div class="t" style="left:382.5px;top:1656.7px;font-size:20.0px;color:#c41425;font-weight:normal;font-family:'Liberation Mono', monospace;-webkit-text-stroke:0.3px currentColor;transform:scaleY(1.12);transform-origin:0 15.3px;">ERROR</div>
<div class="t" style="left:499.5px;top:1656.7px;font-size:20.0px;color:#2b2b2b;font-weight:normal;font-family:'Liberation Mono', monospace;-webkit-text-stroke:0.3px currentColor;transform:scaleY(1.12);transform-origin:0 15.3px;"><span style="color:#3d9b35">[Certificate Monitor]</span><span style="color:#2b2b2b"> SSL Certificate expired on </span><span style="color:#0b8ad8">2023</span><span style="color:#2b2b2b">-</span><span style="color:#0b8ad8">07</span><span style="color:#2b2b2b">-</span><span style="color:#0b8ad8">08</span><span style="color:#2b2b2b"> </span><span style="color:#0b8ad8">00</span><span style="color:#2b2b2b">:</span><span style="color:#0b8ad8">00</span><span style="color:#2b2b2b">:</span><span style="color:#0b8ad8">00</span><span style="color:#2b2b2b">+</span><span style="color:#0b8ad8">00</span><span style="color:#2b2b2b">:</span><span style="color:#0b8ad8">00</span><span style="color:#2b2b2b">. 'ben.example.net' (CN) on </span><span style="color:#0b8ad8">127</span><span style="color:#2b2b2b">.</span><span style="color:#0b8ad8">0</span><span style="color:#2b2b2b">.</span><span style="color:#0b8ad8">0</span><span style="color:#2b2b2b">.</span><span style="color:#0b8ad8">1</span><span style="color:#2b2b2b">:</span><span style="color:#0b8ad8">4444</span><span style="color:#2b2b2b"> expi</span></div>
<svg class="r" style="left:2008px;top:1656px" width="30" height="20" viewBox="0 0 30 20">
<polyline points="3.5,4 15,15.5 26.5,4" fill="none" stroke="#00a1b2" stroke-width="4"/>
</svg>
<div class="r" style="left:965px;top:1557px;width:267px;height:57px;background:#f3effe;border-radius:8px;box-shadow:0 2px 4px rgba(0,0,0,0.06)"></div>
<div class="t" style="left:977.0px;top:1563.5px;font-size:48px;color:#8b55ff;font-weight:bold;font-family:'Liberation Sans', sans-serif;letter-spacing:-1.1px;">Log events</div>
</body></html>
